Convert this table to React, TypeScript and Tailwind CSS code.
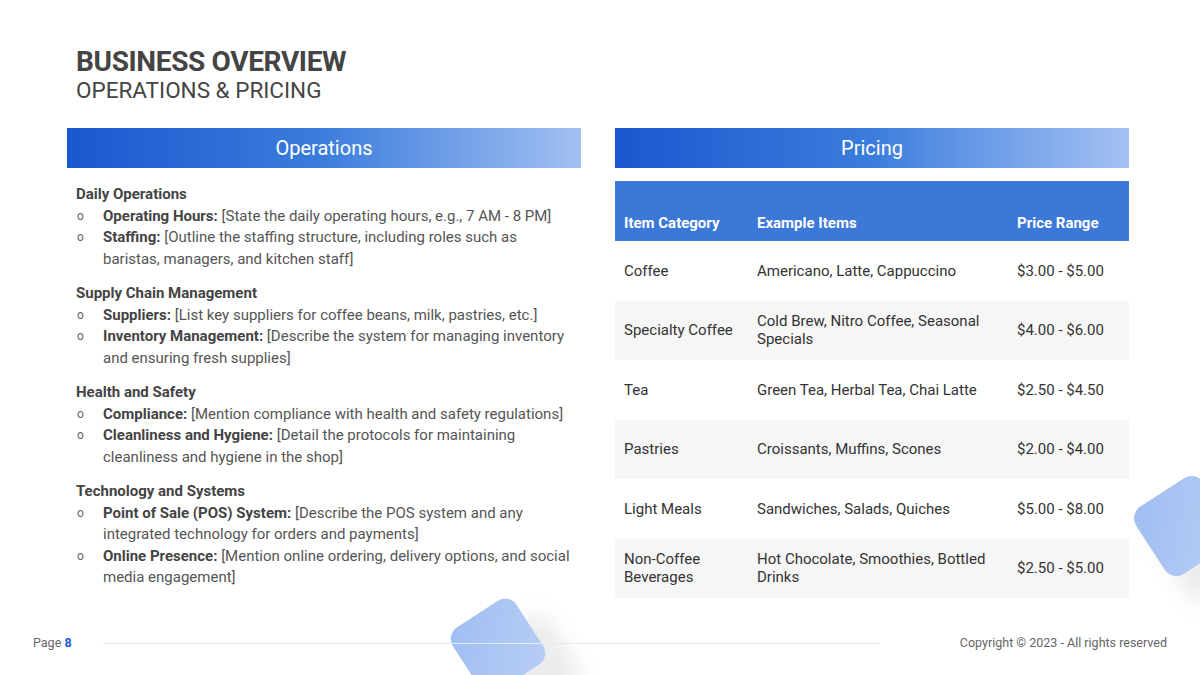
import React from "react";

const sections = [
  {
    title: "Daily Operations",
    items: [
      { label: "Operating Hours:", text: "[State the daily operating hours, e.g., 7 AM - 8 PM]" },
      { label: "Staffing:", text: "[Outline the staffing structure, including roles such as baristas, managers, and kitchen staff]" },
    ],
  },
  {
    title: "Supply Chain Management",
    items: [
      { label: "Suppliers:", text: "[List key suppliers for coffee beans, milk, pastries, etc.]" },
      { label: "Inventory Management:", text: "[Describe the system for managing inventory and ensuring fresh supplies]" },
    ],
  },
  {
    title: "Health and Safety",
    items: [
      { label: "Compliance:", text: "[Mention compliance with health and safety regulations]" },
      { label: "Cleanliness and Hygiene:", text: "[Detail the protocols for maintaining cleanliness and hygiene in the shop]" },
    ],
  },
  {
    title: "Technology and Systems",
    items: [
      { label: "Point of Sale (POS) System:", text: "[Describe the POS system and any integrated technology for orders and payments]" },
      { label: "Online Presence:", text: "[Mention online ordering, delivery options, and social media engagement]" },
    ],
  },
];

const rows = [
  ["Coffee", "Americano, Latte, Cappuccino", "$3.00 - $5.00"],
  ["Specialty Coffee", "Cold Brew, Nitro Coffee, Seasonal Specials", "$4.00 - $6.00"],
  ["Tea", "Green Tea, Herbal Tea, Chai Latte", "$2.50 - $4.50"],
  ["Pastries", "Croissants, Muffins, Scones", "$2.00 - $4.00"],
  ["Light Meals", "Sandwiches, Salads, Quiches", "$5.00 - $8.00"],
  ["Non-Coffee Beverages", "Hot Chocolate, Smoothies, Bottled Drinks", "$2.50 - $5.00"],
];

function SectionBar({ label }: { label: string }) {
  return (
    <div className="h-10 flex items-center justify-center bg-gradient-to-r from-[#1a57cf] via-[#3b7ddc] to-[#a3c0f2] text-white text-[20px]">
      {label}
    </div>
  );
}

export default function App() {
  return (
    <div
      className="relative w-[1200px] h-[675px] overflow-hidden bg-white"
      style={{ fontFamily: "Roboto, 'Liberation Sans', sans-serif" }}
    >
      {/* Decorations */}
      <div className="absolute left-[470px] top-[612px] w-[80px] h-[80px] rounded-[14px] rotate-[-33deg] bg-[#ececec] blur-[10px] translate-x-[20px] translate-y-[12px]" />
      <div className="absolute left-[460px] top-[608px] w-[76px] h-[76px] rounded-[14px] rotate-[-33deg] bg-gradient-to-br from-[#a0bdf2] to-[#b7cef5]" />
      <div className="absolute left-[1150px] top-[494px] w-[80px] h-[80px] rounded-[14px] rotate-[-33deg] bg-[#ececec] blur-[10px] translate-x-[16px] translate-y-[16px]" />
      <div className="absolute left-[1144px] top-[486px] w-[80px] h-[80px] rounded-[14px] rotate-[-33deg] bg-gradient-to-br from-[#a0bdf2] to-[#b7cef5]" />

      <div className="relative flex flex-col h-full">
        {/* Header */}
        <div className="pl-[76px] pt-[45px] text-[#444]">
          <div className="text-[28px] font-bold leading-[34px] tracking-[-0.35px]">BUSINESS OVERVIEW</div>
          <div className="text-[22.5px] leading-[22px]">OPERATIONS &amp; PRICING</div>
        </div>

        <div className="flex gap-[34px] pl-[67px] mt-[27px]">
          {/* Operations */}
          <div className="w-[514px]">
            <SectionBar label="Operations" />
            <div className="pl-[9px] pt-[16px] flex flex-col gap-[13px] text-[15px] leading-[21.5px] text-[#555]">
              {sections.map((s) => (
                <div key={s.title}>
                  <div className="font-bold text-[#444]">{s.title}</div>
                  {s.items.map((it) => (
                    <div key={it.label} className="flex">
                      <span className="w-[27px] shrink-0 text-[12px] pl-[1px] text-[#666]">o</span>
                      <p className="pr-[6px]">
                        <b className="text-[#444]">{it.label}</b> {it.text}
                      </p>
                    </div>
                  ))}
                </div>
              ))}
            </div>
          </div>

          {/* Pricing */}
          <div className="w-[514px]">
            <SectionBar label="Pricing" />
            <div className="mt-[13px] text-[15px] leading-[18px]">
              <div className="grid grid-cols-[133px_260px_121px] h-[60px] items-end pb-[9px] bg-[#3c78d8] text-white font-bold">
                <div className="pl-[9px]">Item Category</div>
                <div className="pl-[9px]">Example Items</div>
                <div className="pl-[9px]">Price Range</div>
              </div>
              {rows.map((r, i) => (
                <div
                  key={r[0]}
                  className={`grid grid-cols-[133px_260px_121px] h-[59.5px] items-center text-[#333] ${
                    i % 2 === 1 ? "bg-[#f6f6f6]" : "bg-white"
                  }`}
                >
                  <div className="pl-[9px] pr-[8px]">{r[0]}</div>
                  <div className="pl-[9px] pr-[8px]">{r[1]}</div>
                  <div className="pl-[9px]">{r[2]}</div>
                </div>
              ))}
            </div>
          </div>
        </div>

        {/* Footer */}
        <div className="absolute left-0 right-0 top-[633px] flex items-center h-[20px] text-[12.5px] text-[#666]">
          <div className="pl-[33px] w-[103px] shrink-0">
            Page <span className="font-bold text-[#1a5bd6]">8</span>
          </div>
          <div className="w-[777px] h-px bg-[#e3ebfb]" />
          <div className="ml-auto pr-[33px]">Copyright © 2023 - All rights reserved</div>
        </div>
      </div>
    </div>
  );
}
